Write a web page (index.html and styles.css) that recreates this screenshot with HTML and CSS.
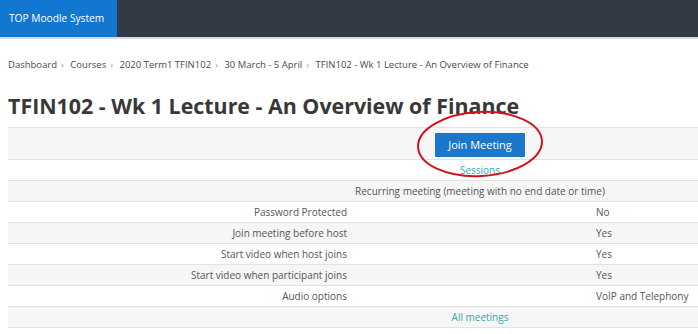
FILE: index.html
```html
<!DOCTYPE html>
<html>
<head>
<meta charset="utf-8">
<link rel="stylesheet" href="styles.css">
</head>
<body>
<header class="navbar">
  <div class="brand">TOP Moodle System</div>
</header>
<main class="page">
  <nav class="crumbs">
    <span>Dashboard</span><span class="sep">›</span>
    <span>Courses</span><span class="sep">›</span>
    <span>2020 Term1 TFIN102</span><span class="sep">›</span>
    <span>30 March - 5 April</span><span class="sep">›</span>
    <span>TFIN102 - Wk 1 Lecture - An Overview of Finance</span>
  </nav>
  <h1 class="title">TFIN102 - Wk 1 Lecture - An Overview of Finance</h1>
  <div class="table">
    <div class="row stripe tall"><div class="full"><span class="btn-wrap"><button class="btn">Join Meeting</button><svg class="ring" width="130" height="70" viewBox="0 0 130 70"><ellipse cx="65" cy="35" rx="62" ry="32" fill="none" stroke="#d0121b" stroke-width="2" transform="rotate(-3 65 35)"/></svg></span></div></div>
    <div class="row"><div class="full link">Sessions</div></div>
    <div class="row stripe"><div class="full">Recurring meeting (meeting with no end date or time)</div></div>
    <div class="row"><div class="label">Password Protected</div><div></div><div class="value">No</div></div>
    <div class="row stripe"><div class="label">Join meeting before host</div><div></div><div class="value">Yes</div></div>
    <div class="row"><div class="label">Start video when host joins</div><div></div><div class="value">Yes</div></div>
    <div class="row stripe"><div class="label">Start video when participant joins</div><div></div><div class="value">Yes</div></div>
    <div class="row"><div class="label">Audio options</div><div></div><div class="value">VoIP and Telephony</div></div>
    <div class="row stripe"><div class="full link">All meetings</div></div>
  </div>
</main>
</body>
</html>
```
FILE: styles.css
```css
html, body {
  margin: 0;
  padding: 0;
  overflow: hidden;
  background: #fff;
  font-family: "Open Sans", "Noto Sans", sans-serif;
}
.navbar {
  height: 37px;
  background: #343a43;
  border-bottom: 2px solid #d9dadc;
  display: flex;
}
.brand {
  background: #1177d1;
  width: 117px;
  color: #fff;
  font-size: 10.2px;
  line-height: 37px;
  padding-left: 9px;
  box-sizing: border-box;
  white-space: nowrap;
}
.page {
  padding-left: 8px;
}
.crumbs {
  margin-top: 19px;
  font-size: 9.5px;
  color: #4a4a4a;
  line-height: 14px;
  white-space: nowrap;
}
.crumbs .sep {
  color: #9a9a9a;
  margin: 0 4px;
}
.title {
  margin: 20px 0 0;
  font-size: 21.4px;
  font-weight: 700;
  color: #383838;
  line-height: 28px;
  white-space: nowrap;
}
.table {
  margin-top: 7px;
  width: 944px;
  border-top: 1px solid #e2e2e2;
  font-size: 10px;
  color: #555;
}
.row {
  display: grid;
  grid-template-columns: 347px 233px 1fr;
  height: 20px;
  border-bottom: 1px solid #e2e2e2;
  align-items: center;
}
.row.tall {
  height: 31px;
}
.stripe {
  background: #f6f6f6;
}
.full {
  grid-column: 1 / 4;
  text-align: center;
}
.label {
  text-align: right;
  padding-right: 8px;
}
.value {
  padding-left: 8px;
}
.link {
  color: #37a8ae;
}
.btn-wrap {
  position: relative;
  display: inline-block;
}
.btn {
  width: 90px;
  height: 24px;
  background: #1a77c9;
  color: #fff;
  border: none;
  border-radius: 1px;
  font-family: "Open Sans", "Noto Sans", sans-serif;
  font-size: 11px;
  padding: 0;
  display: block;
  margin-top: 2px;
}
.ring {
  position: absolute;
  left: -20px;
  top: -22px;
  pointer-events: none;
}
```
